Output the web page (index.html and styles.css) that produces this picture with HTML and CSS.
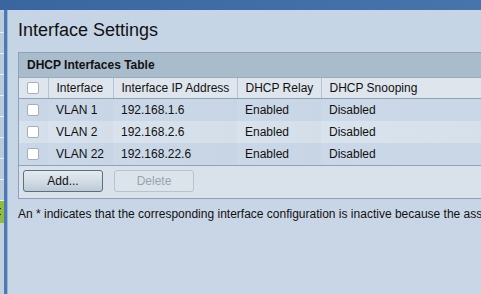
FILE: index.html
```html
<!DOCTYPE html>
<html>
<head>
<meta charset="utf-8">
<link rel="stylesheet" href="styles.css">
</head>
<body>
<div class="topbar"></div>
<div class="frame">
  <div class="nav">
    <div class="nav-items">
      <div class="nav-item"></div>
      <div class="nav-item"></div>
      <div class="nav-item"></div>
      <div class="nav-item"></div>
      <div class="nav-item"></div>
      <div class="nav-item"></div>
      <div class="nav-item"></div>
      <div class="nav-item"></div>
      <div class="nav-item"></div>
      <div class="nav-item green"></div>
      <div class="nav-text">c</div>
    </div>
    <div class="nav-bar"></div>
  </div>
  <div class="main">
    <h1 class="title">Interface Settings</h1>
    <div class="panel">
      <div class="panel-head">DHCP Interfaces Table</div>
      <table class="grid">
        <colgroup>
          <col class="c0"><col class="c1"><col class="c2"><col class="c3"><col class="c4">
        </colgroup>
        <thead>
          <tr>
            <th class="cb-cell"><span class="cb"></span></th>
            <th>Interface</th>
            <th>Interface IP Address</th>
            <th>DHCP Relay</th>
            <th>DHCP Snooping</th>
          </tr>
        </thead>
        <tbody>
          <tr class="odd">
            <td class="cb-cell"><span class="cb"></span></td>
            <td>VLAN 1</td><td>192.168.1.6</td><td>Enabled</td><td>Disabled</td>
          </tr>
          <tr class="even">
            <td class="cb-cell"><span class="cb"></span></td>
            <td>VLAN 2</td><td>192.168.2.6</td><td>Enabled</td><td>Disabled</td>
          </tr>
          <tr class="odd">
            <td class="cb-cell"><span class="cb"></span></td>
            <td>VLAN 22</td><td>192.168.22.6</td><td>Enabled</td><td>Disabled</td>
          </tr>
        </tbody>
      </table>
      <div class="actions">
        <button class="btn">Add...</button>
        <button class="btn disabled">Delete</button>
      </div>
    </div>
    <p class="note">An * indicates that the corresponding interface configuration is inactive because the associated VLAN does not exist.</p>
  </div>
</div>
</body>
</html>
```

FILE: styles.css
```css
html, body {
  margin: 0;
  padding: 0;
  width: 481px;
  height: 294px;
  overflow: hidden;
  background: #c8d6e6;
  font-family: "Liberation Sans", Arial, sans-serif;
  color: #111;
}
.topbar {
  height: 10px;
  background: linear-gradient(to right, #3a66a0, #4674ab);
}
.frame {
  display: flex;
  height: 284px;
}
.nav {
  display: flex;
  width: 8px;
  flex: none;
}
.nav-items {
  width: 4px;
  background: #c3d1df;
  display: flex;
  flex-direction: column;
  padding-top: 2px;
}
.nav-item {
  height: 20px;
  border-bottom: 1px solid #e9eef3;
  background: #bccbdb;
}
.nav-item.green {
  height: 22px;
  background: #8fbf3a;
  border-bottom: none;
}
.nav-text {
  font-size: 12px;
  line-height: 12px;
  margin-top: -18px;
  margin-left: -3px;
  color: #222;
  position: relative;
  white-space: nowrap;
  overflow: hidden;
  width: 4px;
}
.nav-bar {
  width: 3px;
  background: #4a7bb6;
  border-right: 1px solid #9fb4ca;
}
.main {
  flex: 1;
  padding: 10px 0 0 10px;
  overflow: hidden;
  background: linear-gradient(to bottom, #c6d5e6, #c8d6e6);
}
.title {
  margin: 0 0 11px 0;
  font-size: 18px;
  font-weight: normal;
  line-height: 21px;
  color: #111;
  white-space: nowrap;
}
.panel {
  width: 600px;
  border: 1px solid #8ea2b5;
  border-right: none;
}
.panel-head {
  height: 24px;
  line-height: 24px;
  padding-left: 8px;
  background: #a8bccb;
  font-weight: bold;
  font-size: 12px;
  border-bottom: 1px solid #97abbd;
}
.grid {
  border-collapse: collapse;
  table-layout: fixed;
  width: 600px;
  font-size: 12px;
}
.c0 { width: 29px; }
.c1 { width: 65px; }
.c2 { width: 124px; }
.c3 { width: 84px; }
.c4 { width: 298px; }
.grid th {
  font-weight: normal;
  text-align: left;
  background: #dee5ed;
  height: 20px;
  padding: 0 0 0 8px;
  border-left: 1px solid #b3c3d2;
  border-bottom: 1px solid #8fa3b6;
  white-space: nowrap;
}
.grid th:first-child { border-left: none; }
.grid td {
  height: 22px;
  padding: 0 0 0 8px;
  white-space: nowrap;
}
.grid .cb-cell {
  padding-left: 8px;
}
.grid tr.odd td {
  background: linear-gradient(to right, #cbd8e7, #c7d5e5);
}
.grid tr.even td {
  background: linear-gradient(to right, #d9e3ed, #d4dee9);
}
.grid tbody tr:last-child td {
  border-bottom: 1px solid #8fa3b6;
}
.cb {
  display: inline-block;
  width: 10px;
  height: 10px;
  background: #fff;
  border: 1px solid #a4afba;
  border-radius: 2px;
  vertical-align: middle;
  position: relative;
  top: -1px;
}
.actions {
  display: flex;
  gap: 11px;
  padding: 4px 0 6px 4px;
  background: #d9e2eb;
}
.btn {
  width: 80px;
  height: 22px;
  font-family: "Liberation Sans", Arial, sans-serif;
  font-size: 12px;
  color: #111;
  border: 1px solid #5d6e7e;
  border-radius: 3px;
  background: linear-gradient(to bottom, #e4eaf0 0%, #d3dce5 50%, #bccad7 100%);
  padding: 0;
}
.btn.disabled {
  color: #9aa3ac;
  border-color: #b7c3ce;
  background: #dbe3eb;
}
.note {
  margin: 8px 0 0 0;
  font-size: 12px;
  line-height: 14px;
  white-space: nowrap;
  color: #111;
}
```
